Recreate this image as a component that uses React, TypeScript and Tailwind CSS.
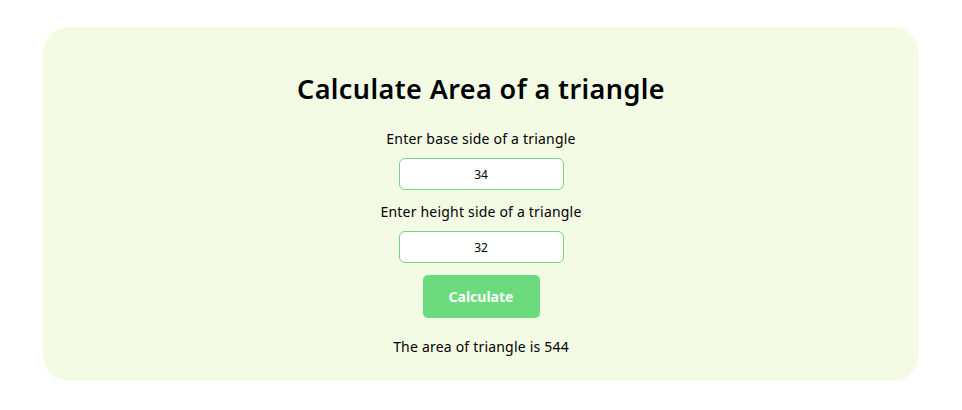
export default function App() {
  return (
    <div className="w-[962px] h-[410px] bg-white pt-[27px] px-[43px]" style={{ fontFamily: '"Noto Sans", "Open Sans", sans-serif' }}>
      <div className="w-[876px] h-[354px] rounded-[26px] bg-[#f3fbe4] flex flex-col items-center pt-[42px] text-black">
        <h1 className="text-[27px] font-semibold leading-[40px] tracking-[0.4px]">Calculate Area of a triangle</h1>
        <label className="mt-[21px] text-[14px] leading-[18px] tracking-[0.2px]">Enter base side of a triangle</label>
        <input
          className="mt-[10px] w-[165px] h-[32px] rounded-[6px] border border-[#74d684] bg-white text-center text-[12px] outline-none"
          defaultValue="34"
        />
        <label className="mt-[13px] text-[14px] leading-[18px] tracking-[0.2px]">Enter height side of a triangle</label>
        <input
          className="mt-[10px] w-[165px] h-[32px] rounded-[6px] border border-[#74d684] bg-white text-center text-[12px] outline-none"
          defaultValue="32"
        />
        <button className="mt-[12px] w-[117px] h-[43px] rounded-[5px] bg-[#6bdb7d] text-white text-[14px] font-bold">
          Calculate
        </button>
        <p className="mt-[20px] text-[14px] leading-[18px] tracking-[0.2px]">The area of triangle is 544</p>
      </div>
    </div>
  );
}
